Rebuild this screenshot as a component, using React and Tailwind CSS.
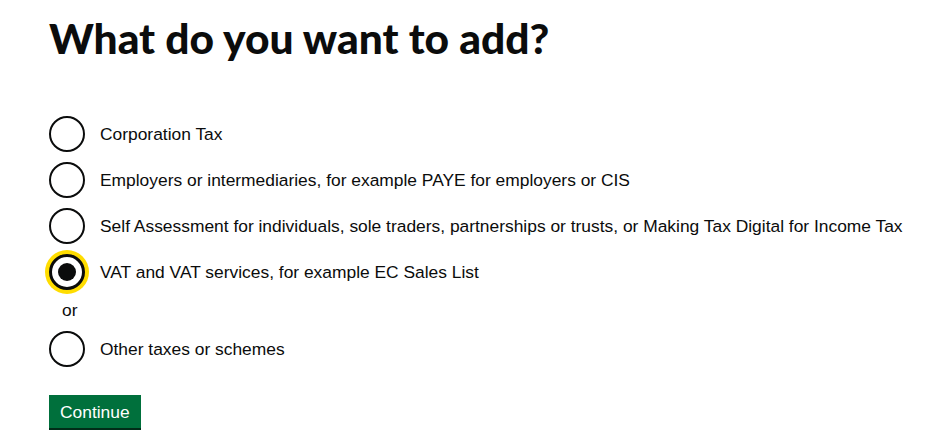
import React from 'react';

const OPTIONS = [
  { id: 'ct', label: 'Corporation Tax' },
  { id: 'paye', label: 'Employers or intermediaries, for example PAYE for employers or CIS' },
  {
    id: 'sa',
    label:
      'Self Assessment for individuals, sole traders, partnerships or trusts, or Making Tax Digital for Income Tax',
  },
  { id: 'vat', label: 'VAT and VAT services, for example EC Sales List' },
];

function Radio({ label, checked }) {
  return (
    <label className="flex items-center h-[36px] mb-[10px]">
      <span
        className={
          checked
            ? 'flex items-center justify-center w-[36px] h-[36px] rounded-full border-[3px] border-[#0b0c0c] bg-white shadow-[0_0_0_4px_#ffdd00]'
            : 'flex items-center justify-center w-[36px] h-[36px] rounded-full border-2 border-[#0b0c0c] bg-white'
        }
      >
        {checked && <span className="w-[18px] h-[18px] rounded-full bg-[#0b0c0c]" />}
      </span>
      <span className="ml-[15px] text-[17.4px] leading-[20px] text-[#0b0c0c]">{label}</span>
    </label>
  );
}

export default function App() {
  return (
    <div
      className="w-[936px] h-[448px] bg-white pl-[49px] pt-[13px] overflow-hidden"
      style={{ fontFamily: '"Liberation Sans", Arial, sans-serif' }}
    >
      <h1
        className="text-[42.5px] leading-[50px] font-black text-[#0b0c0c]"
        style={{ fontFamily: 'Lato, "Liberation Sans", sans-serif' }}
      >
        What do you want to add?
      </h1>
      <div className="mt-[53px]">
        {OPTIONS.map((o) => (
          <Radio key={o.id} label={o.label} checked={o.id === 'vat'} />
        ))}
        <p className="ml-[13px] mt-[7px] mb-[11px] text-[17.4px] leading-[20px] text-[#0b0c0c]">or</p>
        <Radio label="Other taxes or schemes" />
      </div>
      <button
        type="button"
        className="mt-[18px] h-[33px] px-[11px] bg-[#00703c] text-white text-[17.4px] leading-[20px] shadow-[0_2px_0_#002d18]"
      >
        Continue
      </button>
    </div>
  );
}
